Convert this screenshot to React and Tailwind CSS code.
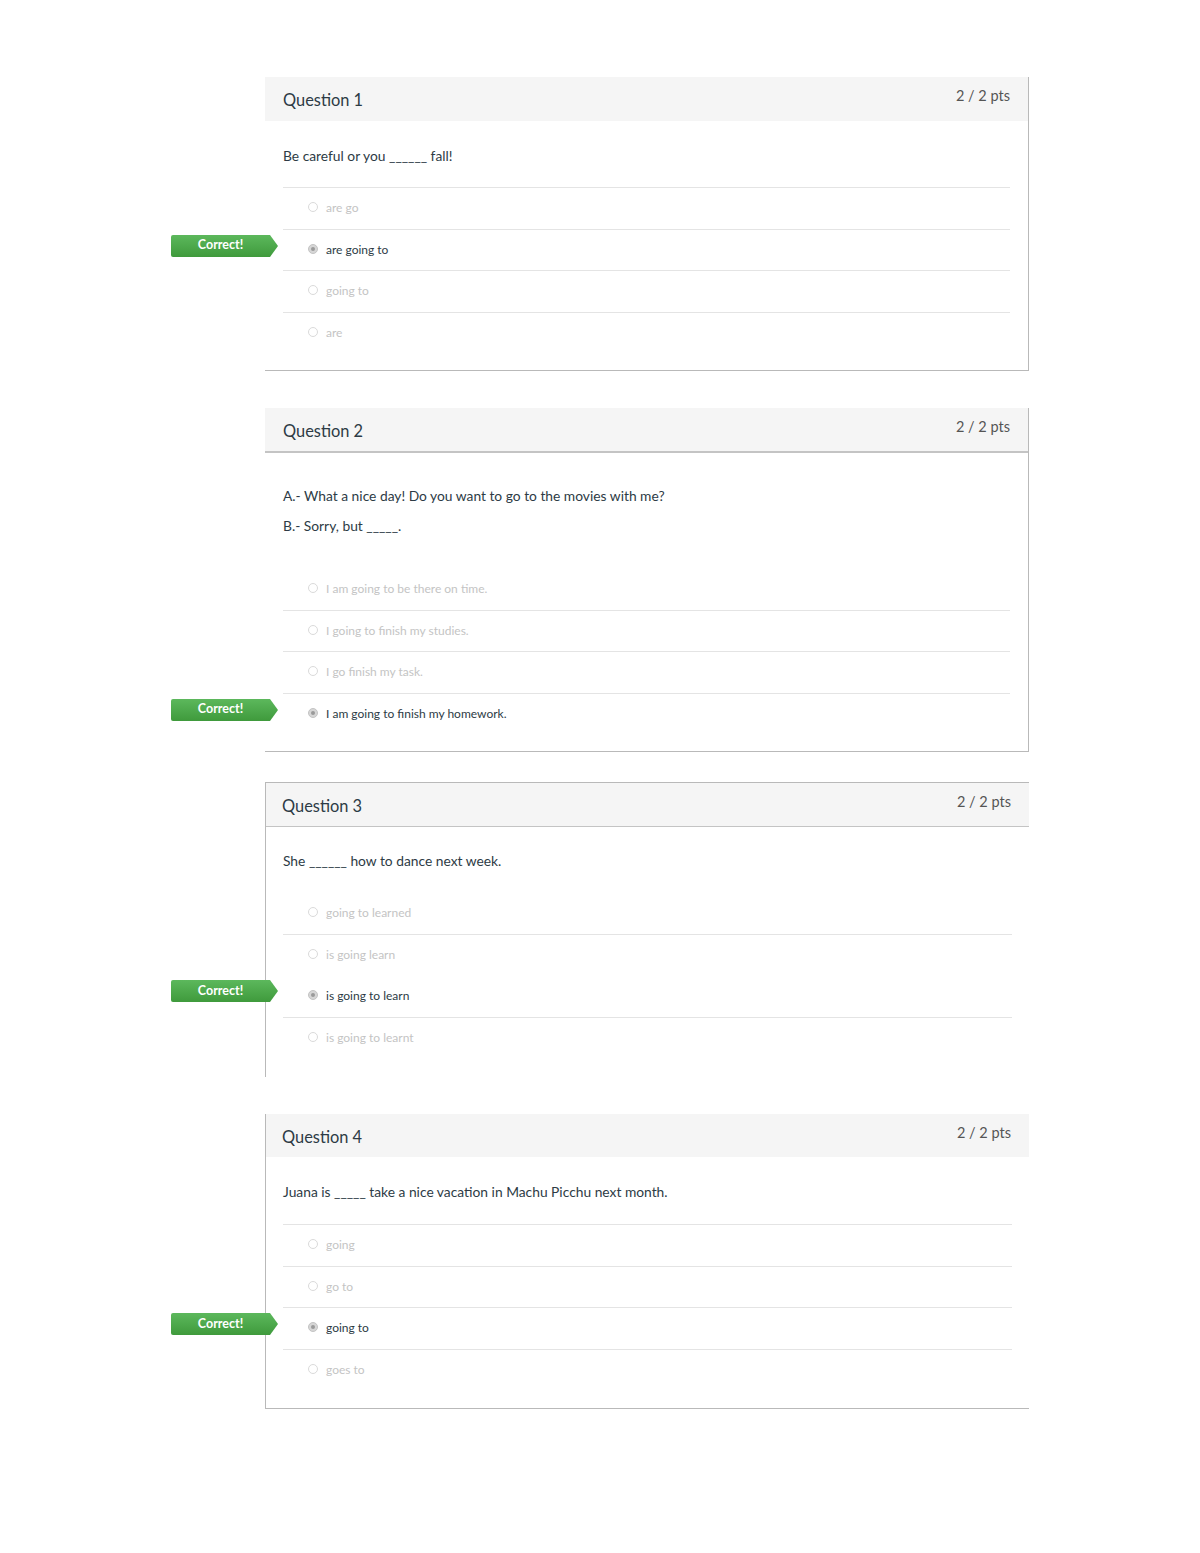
const QUESTIONS = [
  {
    title: "Question 1",
    card: "border-r border-b border-[#b9b9b9] mb-[37px]",
    header: "h-[44px] px-[18px]",
    body: "px-[18px] pb-[17px]",
    prompt: ["Be careful or you ______ fall!"],
    promptBox: "pt-[25px] h-[66px]",
    answers: [
      { text: "are go", line: true },
      { text: "are going to", line: true, correct: true },
      { text: "going to", line: true },
      { text: "are", line: true },
    ],
  },
  {
    title: "Question 2",
    card: "border-r border-b border-[#b9b9b9] mb-[30px]",
    header: "h-[45px] px-[18px] border-b-2 border-[#c4c4c4]",
    body: "px-[18px] pb-[17px]",
    prompt: ["A.- What a nice day! Do you want to go to the movies with me?", "B.- Sorry, but _____."],
    promptBox: "pt-[33px] h-[115px]",
    answers: [
      { text: "I am going to be there on time.", line: false },
      { text: "I going to finish my studies.", line: true },
      { text: "I go finish my task.", line: true },
      { text: "I am going to finish my homework.", line: true, correct: true },
    ],
  },
  {
    title: "Question 3",
    card: "border-t border-l border-[#b9b9b9] mb-[37px]",
    header: "h-[44px] pl-[16px] pr-[18px] border-b border-[#c4c4c4]",
    body: "pl-[17px] pr-[17px] pb-[19px]",
    prompt: ["She ______ how to dance next week."],
    promptBox: "pt-[24px] h-[65px]",
    answers: [
      { text: "going to learned", line: false },
      { text: "is going learn", line: true },
      { text: "is going to learn", line: false, correct: true },
      { text: "is going to learnt", line: true },
    ],
  },
  {
    title: "Question 4",
    card: "border-l border-b border-[#b9b9b9]",
    header: "h-[43px] pl-[16px] pr-[18px]",
    body: "pl-[17px] pr-[17px] pb-[18px]",
    prompt: ["Juana is _____ take a nice vacation in Machu Picchu next month."],
    promptBox: "pt-[25px] h-[67px]",
    answers: [
      { text: "going", line: true },
      { text: "go to", line: true },
      { text: "going to", line: true, correct: true },
      { text: "goes to", line: true },
    ],
  },
];

function CorrectBadge() {
  return (
    <div className="absolute left-[-112px] top-[5px] w-[107px] h-[22px]">
      <svg width="107" height="22" viewBox="0 0 107 22" className="absolute inset-0">
        <defs>
          <linearGradient id="g" x1="0" y1="0" x2="0" y2="1">
            <stop offset="0" stopColor="#5cb85c" />
            <stop offset="1" stopColor="#3f9a3c" />
          </linearGradient>
        </defs>
        <path d="M2 0H99L107 11L99 22H2Q0 22 0 20V2Q0 0 2 0Z" fill="url(#g)" />
      </svg>
      <div className="relative w-[99px] h-[22px] flex items-center justify-center text-white text-[12.5px] font-bold">
        Correct!
      </div>
    </div>
  );
}

function Answer({ a }) {
  return (
    <div className={`relative h-[41.5px] flex items-center pl-[25px] ${a.line ? "border-t border-[#e4e4e4]" : ""}`}>
      {a.correct && <CorrectBadge />}
      {a.correct ? (
        <span className="w-[10px] h-[10px] rounded-full bg-[#d6d6d6] border border-[#c4c4c4] flex items-center justify-center -mt-[2px]">
          <span className="w-[4px] h-[4px] rounded-full bg-[#9a9a9a]" />
        </span>
      ) : (
        <span className="w-[10px] h-[10px] rounded-full border border-[#dadada] bg-white -mt-[2px]" />
      )}
      <span className={`ml-[8px] text-[12px] ${a.correct ? "text-[#2d3b45]" : "text-[#c4c4c4]"}`}>{a.text}</span>
    </div>
  );
}

function QuestionCard({ q }) {
  return (
    <div className={`bg-white ${q.card}`}>
      <div className={`bg-[#f5f5f5] flex justify-between items-start ${q.header}`}>
        <div className="pt-[13px] text-[16.4px] leading-[20px] text-[#2d3b45]">{q.title}</div>
        <div className="pt-[9px] text-[14.5px] leading-[20px] text-[#555]">2 / 2 pts</div>
      </div>
      <div className={q.body}>
        <div className={`flex flex-col gap-[10px] ${q.promptBox}`}>
          {q.prompt.map((p) => (
            <div key={p} className="text-[13.8px] leading-[20px] text-[#2d3b45]">{p}</div>
          ))}
        </div>
        {q.answers.map((a) => (
          <Answer key={a.text} a={a} />
        ))}
      </div>
    </div>
  );
}

export default function App() {
  return (
    <div className="min-h-[1553px] bg-white font-['Lato',sans-serif]">
      <div className="ml-[265px] w-[764px] pt-[77px]">
        {QUESTIONS.map((q) => (
          <QuestionCard key={q.title} q={q} />
        ))}
      </div>
    </div>
  );
}
